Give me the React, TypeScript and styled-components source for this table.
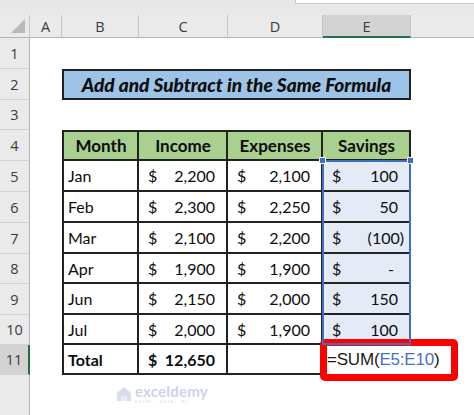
import React from "react";
import styled, { createGlobalStyle, css } from "styled-components";

const GlobalStyle = createGlobalStyle`
  html, body { margin: 0; padding: 0; background: #ffffff; }
  body { overflow: hidden; }
  * { box-sizing: border-box; }
`;

const Window = styled.div`
  width: 474px;
  height: 415px;
  display: flex;
  flex-direction: column;
  overflow: hidden;
  background: #ffffff;
  font-family: Lato, "Open Sans", sans-serif;
`;

const TopBar = styled.div`
  height: 15px;
  flex: none;
  background: #e8e8e8;
  display: flex;
  justify-content: flex-end;
  align-items: flex-start;
`;

const FormulaEdge = styled.div`
  width: 179px;
  height: 4px;
  background: #ffffff;
  border-left: 1px solid #c9c9c9;
  border-bottom: 1px solid #c9c9c9;
`;

const Sheet = styled.div`
  flex: 1;
  display: grid;
  grid-template-columns: 30px 32px 77px 89px 95px 88px 1fr;
  grid-template-rows: 23px 31px 31px 30px 31px 31px 31px 31px 30px 31px 30px 30px 1fr;
  background: #ffffff;
`;

type Pos = { $row: number; $col: number; $span?: number };

const placed = css<Pos>`
  grid-row: ${(p) => p.$row};
  grid-column: ${(p) => `${p.$col} / span ${p.$span ?? 1}`};
`;

const HeaderBand = styled.div`
  grid-row: 1;
  grid-column: 1 / -1;
  background: #eaeaea;
  border-bottom: 1px solid #b4b4b4;
`;

const Corner = styled.div`
  grid-row: 1;
  grid-column: 1;
  border-right: 1px solid #c6c6c6;
  border-bottom: 1px solid #b4b4b4;
  display: flex;
  align-items: flex-end;
  justify-content: flex-end;
  padding: 0 4px 4px 0;
`;

const ColHeader = styled.div<Pos & { $active?: boolean }>`
  ${placed};
  display: flex;
  align-items: center;
  justify-content: center;
  font-family: "Open Sans", "Noto Sans", sans-serif;
  font-size: 14.5px;
  color: #3a3a3a;
  border-right: 1px solid #c6c6c6;
  border-bottom: ${(p) => (p.$active ? "2px solid #217346" : "1px solid #b4b4b4")};
  background: ${(p) => (p.$active ? "#d3d3d3" : "#eaeaea")};
  padding-top: ${(p) => (p.$active ? "1px" : "0")};
`;

const RowHeader = styled.div<Pos & { $active?: boolean }>`
  ${placed};
  display: flex;
  align-items: center;
  justify-content: center;
  font-family: "Open Sans", "Noto Sans", sans-serif;
  font-size: 14.5px;
  color: #3a3a3a;
  background: ${(p) => (p.$active ? "#d3d3d3" : "#eaeaea")};
  border-bottom: 1px solid #d2d2d2;
  border-right: ${(p) => (p.$active ? "2px solid #217346" : "1px solid #b4b4b4")};
`;

const RowHeaderFill = styled.div`
  grid-row: 13;
  grid-column: 1;
  background: #eaeaea;
  border-right: 1px solid #b4b4b4;
`;

const TitleCell = styled.div`
  grid-row: 3;
  grid-column: 3 / 7;
  background: #9dc3e6;
  border: 2px solid #202020;
  display: flex;
  align-items: center;
  justify-content: center;
  font-weight: 900;
  font-style: italic;
  font-size: 19px;
  color: #0d0d0d;
`;

type CellProps = Pos & {
  $head?: boolean;
  $bold?: boolean;
  $left?: boolean;
  $top?: boolean;
  $sel?: boolean;
  $align?: "left" | "center";
};

const Cell = styled.div<CellProps>`
  ${placed};
  display: flex;
  align-items: center;
  justify-content: ${(p) => (p.$align === "center" ? "center" : "flex-start")};
  padding: 0 3px 0 4px;
  color: #0d0d0d;
  font-weight: ${(p) => (p.$head || p.$bold ? 700 : 400)};
  font-size: ${(p) => (p.$head ? "17px" : "16px")};
  background: ${(p) => (p.$head ? "#a9d08e" : p.$sel ? "#e4ebf7" : "#ffffff")};
  border-right: 2px solid #222;
  border-bottom: 2px solid #222;
  border-left: ${(p) => (p.$left ? "2px solid #222" : "none")};
  border-top: ${(p) => (p.$top ? "2px solid #222" : "none")};
`;

const Currency = styled.span`
  padding-left: 5px;
`;

const Amount = styled.span<{ $trail: number }>`
  margin-left: auto;
  padding-right: ${(p) => p.$trail}px;
`;

const SelectionFrame = styled.div`
  grid-row: 6 / 12;
  grid-column: 6;
  margin: -1px 0 0 -1px;
  border: 2px solid #3d6fc2;
  position: relative;
  pointer-events: none;
`;

const Handle = styled.div<{ $side: "left" | "right" }>`
  position: absolute;
  top: -5px;
  ${(p) => (p.$side === "left" ? "left: -5px;" : "right: -5px;")}
  width: 7px;
  height: 7px;
  background: #3d6fc2;
  border: 1px solid #ffffff;
`;

const FormulaCallout = styled.div`
  grid-row: 12;
  grid-column: 6 / 8;
  align-self: start;
  margin: -6px 0 0 -3px;
  width: 138px;
  height: 42px;
  border: 7px solid #ff0000;
  border-radius: 5px;
  background: #ffffff;
  display: flex;
  align-items: center;
  font-family: "Liberation Sans", Arial, sans-serif;
  font-size: 17px;
  color: #1a1a1a;
  white-space: nowrap;
  letter-spacing: -0.2px;
`;

const RefText = styled.span`
  color: #4472c4;
`;

const Watermark = styled.div`
  grid-row: 13;
  grid-column: 3 / 6;
  align-self: start;
  margin: 9px 0 0 54px;
  display: flex;
  align-items: center;
  gap: 3px;
  opacity: 0.55;
`;

const MarkText = styled.div`
  display: flex;
  flex-direction: column;
  line-height: 1;
`;

const MarkName = styled.span`
  font-family: Lato, sans-serif;
  font-weight: 700;
  font-size: 15px;
  color: #9fb0d6;
  letter-spacing: 0.2px;
`;

const MarkSub = styled.span`
  font-family: Lato, sans-serif;
  font-size: 4px;
  color: #b0b8c8;
  letter-spacing: 1.2px;
  margin-top: 1px;
`;

type Row = { label: string; income: string; expenses: string; savings: string; trail: number };

const rows: Row[] = [
  { label: "Jan", income: "2,200", expenses: "2,100", savings: "100", trail: 8 },
  { label: "Feb", income: "2,300", expenses: "2,250", savings: "50", trail: 8 },
  { label: "Mar", income: "2,100", expenses: "2,200", savings: "(100)", trail: 2 },
  { label: "Apr", income: "1,900", expenses: "1,900", savings: "-", trail: 12 },
  { label: "Jun", income: "2,150", expenses: "2,000", savings: "150", trail: 8 },
  { label: "Jul", income: "2,000", expenses: "1,900", savings: "100", trail: 8 },
];

const cols = ["A", "B", "C", "D", "E"];

export default function App() {
  return (
    <Window>
      <GlobalStyle />
      <TopBar>
        <FormulaEdge />
      </TopBar>
      <Sheet>
        <HeaderBand />
        <Corner>
          <svg width="14" height="14" viewBox="0 0 14 14">
            <polygon points="14,0 14,14 0,14" fill="#b9b9b9" />
          </svg>
        </Corner>
        {cols.map((c, i) => (
          <ColHeader key={c} $row={1} $col={i + 2} $active={c === "E"}>
            {c}
          </ColHeader>
        ))}
        {Array.from({ length: 11 }, (_, i) => (
          <RowHeader key={i} $row={i + 2} $col={1} $active={i === 10}>
            {i + 1}
          </RowHeader>
        ))}
        <RowHeaderFill />

        <TitleCell>Add and Subtract in the Same Formula</TitleCell>

        {["Month", "Income", "Expenses", "Savings"].map((h, i) => (
          <Cell key={h} $row={5} $col={i + 3} $head $top $left={i === 0} $align="center">
            {h}
          </Cell>
        ))}

        {rows.map((r, i) => (
          <React.Fragment key={r.label}>
            <Cell $row={i + 6} $col={3} $left>
              {r.label}
            </Cell>
            <Cell $row={i + 6} $col={4}>
              <Currency>$</Currency>
              <Amount $trail={8}>{r.income}</Amount>
            </Cell>
            <Cell $row={i + 6} $col={5}>
              <Currency>$</Currency>
              <Amount $trail={8}>{r.expenses}</Amount>
            </Cell>
            <Cell $row={i + 6} $col={6} $sel>
              <Currency>$</Currency>
              <Amount $trail={r.trail}>{r.savings}</Amount>
            </Cell>
          </React.Fragment>
        ))}

        <Cell $row={12} $col={3} $left $bold>
          Total
        </Cell>
        <Cell $row={12} $col={4} $bold>
          <Currency>$</Currency>
          <Amount $trail={8}>12,650</Amount>
        </Cell>
        <Cell $row={12} $col={5} />
        <Cell $row={12} $col={6} />

        <SelectionFrame>
          <Handle $side="left" />
          <Handle $side="right" />
        </SelectionFrame>

        <FormulaCallout>
          =SUM(<RefText>E5:E10</RefText>)
        </FormulaCallout>

        <Watermark>
          <svg width="16" height="16" viewBox="0 0 16 16">
            <path d="M1 7 L8 1 L15 7 L15 15 L1 15 Z" fill="#b7c3dd" />
            <path d="M5 15 L5 10 L11 10 L11 15" fill="#d6deee" />
          </svg>
          <MarkText>
            <MarkName>exceldemy</MarkName>
            <MarkSub>EXCEL · DATA · BI</MarkSub>
          </MarkText>
        </Watermark>
      </Sheet>
    </Window>
  );
}
